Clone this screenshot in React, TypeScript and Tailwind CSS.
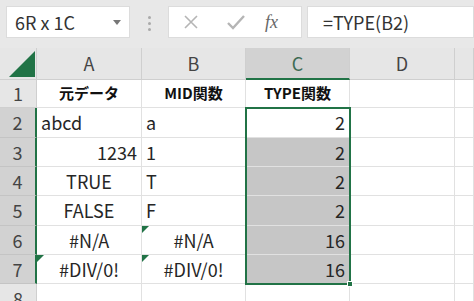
import React from 'react';

const cols = 'grid grid-cols-[37px_105px_104px_104px_105px_1fr]';
const font = { fontFamily: '"Noto Sans CJK JP", "Noto Sans", sans-serif' };

type Cell = { text?: string; align?: 'left' | 'right' | 'center'; bold?: boolean; flag?: boolean; shade?: boolean };

const rows: { n: number; h: string; cells: Cell[] }[] = [
  { n: 1, h: 'h-[28px]', cells: [{ text: '元データ', align: 'center', bold: true }, { text: 'MID関数', align: 'center', bold: true }, { text: 'TYPE関数', align: 'center', bold: true }] },
  { n: 2, h: 'h-[30px]', cells: [{ text: 'abcd', align: 'left' }, { text: 'a', align: 'left' }, { text: '2', align: 'right' }] },
  { n: 3, h: 'h-[29px]', cells: [{ text: '1234', align: 'right' }, { text: '1', align: 'left' }, { text: '2', align: 'right', shade: true }] },
  { n: 4, h: 'h-[29px]', cells: [{ text: 'TRUE', align: 'center' }, { text: 'T', align: 'left' }, { text: '2', align: 'right', shade: true }] },
  { n: 5, h: 'h-[30px]', cells: [{ text: 'FALSE', align: 'center' }, { text: 'F', align: 'left' }, { text: '2', align: 'right', shade: true }] },
  { n: 6, h: 'h-[29px]', cells: [{ text: '#N/A', align: 'center' }, { text: '#N/A', align: 'center', flag: true }, { text: '16', align: 'right', shade: true }] },
  { n: 7, h: 'h-[29px]', cells: [{ text: '#DIV/0!', align: 'center', flag: true }, { text: '#DIV/0!', align: 'center', flag: true }, { text: '16', align: 'right', shade: true }] },
  { n: 8, h: 'h-[29px]', cells: [] },
];

const alignClass = (a?: string) =>
  a === 'right' ? 'justify-end pr-[4px]' : a === 'center' ? 'justify-center' : 'justify-start pl-[4px]';

function GridCell({ cell }: { cell?: Cell }) {
  return (
    <div
      className={`relative flex items-center border-r border-b border-[#e1e1e1] ${alignClass(cell?.align)} ${
        cell?.shade ? 'bg-[#c6c6c6]' : 'bg-white'
      }`}
    >
      {cell?.flag && (
        <div className="absolute left-0 top-0 h-0 w-0 border-t-[7px] border-r-[7px] border-t-[#217346] border-r-transparent" />
      )}
      {cell?.text && (
        <span className={cell.bold ? 'text-[15px] font-bold text-[#111]' : 'text-[18px] text-[#262626]'}>{cell.text}</span>
      )}
    </div>
  );
}

export default function App() {
  return (
    <div className="h-[301px] w-[474px] overflow-hidden bg-white" style={font}>
      {/* Formula bar */}
      <div className="flex h-[48px] items-start gap-0 bg-[#e8e8e8] pt-[6px]">
        <div className="ml-[6px] flex h-[32px] w-[124px] items-center justify-between border border-[#dcdcdc] bg-white pl-[8px] pr-[8px]">
          <span className="text-[18px] text-[#333]">6R x 1C</span>
          <div className="h-0 w-0 border-x-[4px] border-t-[5px] border-x-transparent border-t-[#777]" />
        </div>
        <div className="flex w-[38px] flex-col items-center gap-[3px] pt-[10px]">
          <div className="h-[3px] w-[3px] rounded-full bg-[#aaa]" />
          <div className="h-[3px] w-[3px] rounded-full bg-[#aaa]" />
          <div className="h-[3px] w-[3px] rounded-full bg-[#aaa]" />
        </div>
        <div className="flex h-[32px] w-[134px] items-center border border-[#dcdcdc] bg-white">
          <svg width="18" height="18" viewBox="0 0 18 18" className="ml-[13px]">
            <path d="M3 3 L15 15 M15 3 L3 15" stroke="#b5b5b5" strokeWidth="1.6" fill="none" />
          </svg>
          <svg width="20" height="18" viewBox="0 0 20 18" className="ml-[26px]">
            <path d="M2 10 L7 15 L18 3" stroke="#b5b5b5" strokeWidth="2.4" fill="none" />
          </svg>
          <span className="ml-[19px] text-[18px] italic text-[#666]" style={{ fontFamily: '"Liberation Serif", serif' }}>
            fx
          </span>
        </div>
        <div className="ml-[5px] flex h-[32px] flex-1 items-center border border-[#dcdcdc] bg-white pl-[15px]">
          <span className="text-[18px] text-[#333]">=TYPE(B2)</span>
        </div>
      </div>

      {/* Column headers */}
      <div className={`${cols} h-[32px] bg-[#e6e6e6]`}>
        <div className="relative border-r border-b border-[#cfcfcf]">
          <svg width="26" height="26" viewBox="0 0 26 26" className="absolute right-[1px] bottom-[2px]">
            <path d="M0 26 L26 0 L26 26 Z" fill="#217346" />
          </svg>
        </div>
        {['A', 'B', 'C', 'D', ''].map((c) => (
          <div
            key={c}
            className={`flex items-center justify-center text-[18px] ${
              c === 'C'
                ? 'border-b-2 border-b-[#217346] border-r border-r-[#cfcfcf] bg-[#d2d2d2] text-[#3d6b53]'
                : 'border-r border-b border-[#cfcfcf] text-[#444]'
            }`}
          >
            {c}
          </div>
        ))}
      </div>

      {/* Sheet body */}
      <div className="relative">
        {rows.map((r) => {
          const sel = r.n >= 2 && r.n <= 7;
          return (
            <div key={r.n} className={`${cols} ${r.h}`}>
              <div
                className={`flex items-center justify-center border-b text-[18px] text-[#444] ${
                  sel
                    ? 'border-b-[#c4c4c4] border-r-2 border-r-[#217346] bg-[#d2d2d2]'
                    : 'border-b-[#cfcfcf] border-r border-r-[#cfcfcf] bg-[#e6e6e6]'
                }`}
              >
                {r.n}
              </div>
              <GridCell cell={r.cells[0]} />
              <GridCell cell={r.cells[1]} />
              <GridCell cell={r.cells[2]} />
              <GridCell />
              <GridCell />
            </div>
          );
        })}
        {/* selection box C2:C7 */}
        <div className="pointer-events-none absolute left-[245px] top-[27px] h-[178px] w-[106px] border-2 border-[#217346]" />
        <div className="absolute left-[347px] top-[201px] h-[6px] w-[6px] border border-white bg-[#217346]" />
      </div>
    </div>
  );
}
